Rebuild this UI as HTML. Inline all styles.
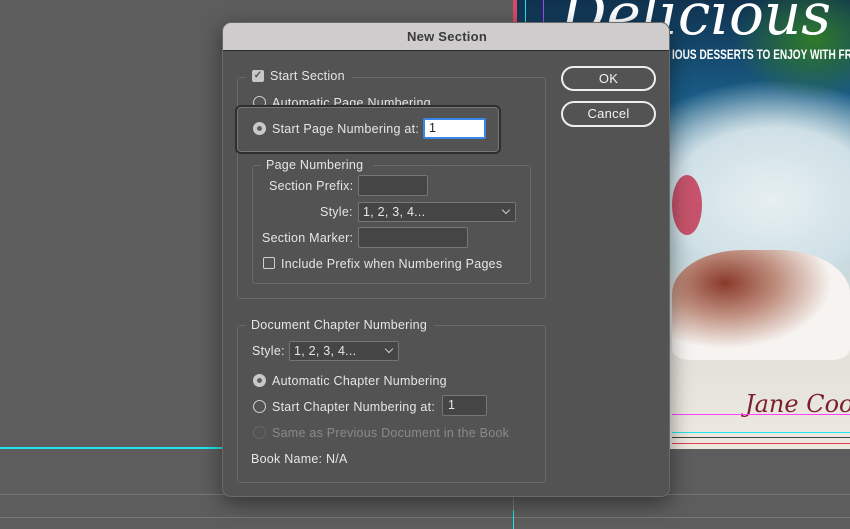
<!DOCTYPE html>
<html><head><meta charset="utf-8"><style>
*{margin:0;padding:0;box-sizing:border-box}
body{width:850px;height:529px;overflow:hidden;background:#5d5d5d;position:relative;font-family:"Liberation Sans",sans-serif;font-size:12.5px;letter-spacing:.25px;color:#e6e6e6}
.a{position:absolute}
.t{position:absolute;white-space:nowrap;line-height:14px}
.box{position:absolute;border:1px solid #6a6a6a;border-radius:3px}
.in{position:absolute;background:#454545;border:1px solid #767676;border-radius:2px}
.rad{position:absolute;width:13px;height:13px;border-radius:50%;border:1px solid #cfcfcf}
.rad.on{background:#5e5e5e;border:4px solid #c9c9c9}
.btn{position:absolute;border:2px solid #eee;border-radius:13px;text-align:center;font-size:13px;color:#f2f2f2}
.dd{position:absolute;width:6px;height:6px;border-right:1px solid #ccc;border-bottom:1px solid #ccc;transform:rotate(45deg)}
</style></head><body>
<div class="a" style="left:0;top:447px;width:513px;height:2px;background:#1fe6ea"></div>
<div class="a" style="left:0;top:494px;width:850px;height:1px;background:#777"></div>
<div class="a" style="left:0;top:517px;width:850px;height:1px;background:#777"></div>
<div class="a" style="left:513px;top:0;width:1px;height:529px;background:#7a7a7a"></div>
<div class="a" style="left:513px;top:510px;width:1px;height:19px;background:#1fe6ea"></div>
<div class="a" style="left:513px;top:0;width:337px;height:449px;background:
radial-gradient(ellipse 80px 60px at 300px 40px,#2f7a2a 0%,transparent 100%),
radial-gradient(ellipse 170px 120px at 260px 200px,#e6eff1 0%,#cfe0e6 60%,transparent 100%),
linear-gradient(180deg,#10324f 0%,#1a5d87 22%,#6f9fb4 45%,#d9dcd6 65%,#eee9e0 100%)"></div>
<div class="a" style="left:513px;top:0;width:4px;height:30px;background:#d84a6a"></div>
<div class="a" style="left:525px;top:0;width:1px;height:25px;background:#1fe6ea"></div>
<div class="a" style="left:543px;top:0;width:1px;height:25px;background:#b040ff"></div>
<div class="a" style="left:672px;top:175px;width:30px;height:60px;border-radius:50%;background:#c33a55;opacity:.85"></div>
<div class="a" style="left:672px;top:250px;width:178px;height:110px;border-radius:40% 40% 10% 10%;background:radial-gradient(ellipse at 30% 30%,#8a3a2a 0%,#c09080 30%,#f6f3f0 60%)"></div>
<div class="t" style="left:560px;top:-18px;font-family:'DejaVu Serif',serif;font-style:italic;font-size:58px;line-height:64px;color:#fff;letter-spacing:0">Delicious</div>
<div class="t" style="left:672px;top:47px;font-size:14px;font-weight:bold;color:#fff;letter-spacing:0;transform:scaleX(.72);transform-origin:left">IOUS DESSERTS TO ENJOY WITH FRIENDS</div>
<div class="t" style="left:745px;top:390px;font-family:'DejaVu Serif',serif;font-style:italic;font-size:24px;line-height:28px;color:#7a1e30;letter-spacing:0">Jane Cook</div>
<div class="a" style="left:672px;top:414px;width:178px;height:1px;background:#ff40ff"></div>
<div class="a" style="left:672px;top:432px;width:178px;height:1px;background:#1fe6ea"></div>
<div class="a" style="left:672px;top:437px;width:178px;height:1px;background:#444"></div>
<div class="a" style="left:672px;top:443px;width:178px;height:1px;background:#e04050"></div>
<div class="a" style="left:222px;top:22px;width:448px;height:475px;border-radius:9px;background:#535353;box-shadow:0 6px 22px rgba(0,0,0,.45);border:1px solid #6a6a6a;overflow:hidden">
 <div class="a" style="left:0;top:0;width:448px;height:28px;background:#cecccd;border-bottom:1px solid #2a2a2a"></div>
 <div class="t" style="left:0;top:7px;width:448px;text-align:center;font-weight:bold;font-size:13px;color:#3a3a3a">New Section</div>
</div>
<div class="btn" style="left:561px;top:66px;width:95px;height:25px;line-height:21px">OK</div>
<div class="btn" style="left:561px;top:101px;width:95px;height:26px;line-height:22px">Cancel</div>
<div class="box" style="left:237px;top:77px;width:309px;height:222px"></div>
<div class="a" style="left:246px;top:68px;width:106px;height:16px;background:#535353"></div>
<div class="a" style="left:252px;top:70px;width:12px;height:12px;background:#c7c7c7;border-radius:2px;color:#555;font-size:10px;line-height:12px;text-align:center;font-weight:bold;letter-spacing:0">✓</div>
<div class="t" style="left:270px;top:69px">Start Section</div>
<div class="rad" style="left:253px;top:96px"></div>
<div class="t" style="left:272px;top:96px">Automatic Page Numbering</div>
<div class="a" style="left:235px;top:105px;width:266px;height:49px;background:#535353;border:2px solid #2e2e2e;border-radius:6px;box-shadow:0 0 0 1px #777 inset"></div>
<div class="rad on" style="left:253px;top:122px"></div>
<div class="t" style="left:272px;top:122px">Start Page Numbering at:</div>
<div class="a" style="left:423px;top:118px;width:63px;height:21px;background:#fff;border:2px solid #3a86e8;border-radius:2px;color:#222;padding-left:4px;line-height:17px">1</div>
<div class="box" style="left:252px;top:165px;width:279px;height:119px"></div>
<div class="a" style="left:261px;top:158px;width:112px;height:14px;background:#535353"></div>
<div class="t" style="left:266px;top:158px">Page Numbering</div>
<div class="t" style="left:269px;top:179px">Section Prefix:</div>
<div class="in" style="left:358px;top:175px;width:70px;height:21px"></div>
<div class="t" style="left:320px;top:205px">Style:</div>
<div class="in" style="left:358px;top:202px;width:158px;height:20px"></div>
<div class="t" style="left:363px;top:205px">1, 2, 3, 4...</div>
<div class="dd" style="left:503px;top:207px"></div>
<div class="t" style="left:262px;top:231px">Section Marker:</div>
<div class="in" style="left:358px;top:227px;width:110px;height:21px"></div>
<div class="a" style="left:263px;top:257px;width:12px;height:12px;border:1px solid #cfcfcf;border-radius:2px"></div>
<div class="t" style="left:281px;top:257px">Include Prefix when Numbering Pages</div>
<div class="box" style="left:237px;top:325px;width:309px;height:158px"></div>
<div class="a" style="left:246px;top:318px;width:188px;height:14px;background:#535353"></div>
<div class="t" style="left:251px;top:318px">Document Chapter Numbering</div>
<div class="t" style="left:252px;top:344px">Style:</div>
<div class="in" style="left:289px;top:341px;width:110px;height:20px"></div>
<div class="t" style="left:294px;top:344px">1, 2, 3, 4...</div>
<div class="dd" style="left:386px;top:346px"></div>
<div class="rad on" style="left:253px;top:374px"></div>
<div class="t" style="left:272px;top:374px">Automatic Chapter Numbering</div>
<div class="rad" style="left:253px;top:400px"></div>
<div class="t" style="left:272px;top:400px">Start Chapter Numbering at:</div>
<div class="in" style="left:442px;top:395px;width:45px;height:21px;padding-left:5px;line-height:19px">1</div>
<div class="rad" style="left:253px;top:426px;border-color:#666"></div>
<div class="t" style="left:272px;top:426px;color:#8a8a8a">Same as Previous Document in the Book</div>
<div class="t" style="left:251px;top:452px">Book Name: N/A</div>
</body></html>
